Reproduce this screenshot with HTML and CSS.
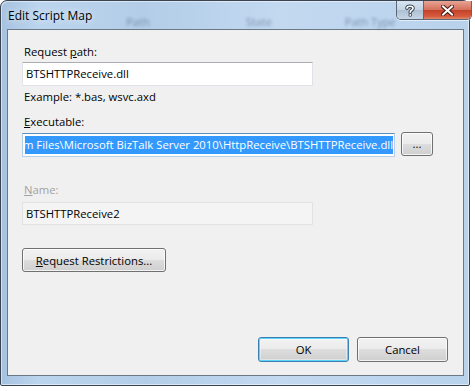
FILE: index.html
```html
<!DOCTYPE html>
<html lang="en">
<head>
    <meta charset="UTF-8">
    <title>Edit Script Map</title>
    <link rel="stylesheet" href="styles.css">
</head>
<body>
    <div class="window">
        <div class="titlebar">
            <span class="title">Edit Script Map</span>
            <span class="ghost ghost-path">Path</span>
            <span class="ghost ghost-state">State</span>
            <span class="ghost ghost-type">Path Type</span>
            <div class="caption-btns">
                <div class="cbtn help">
                    <svg width="12" height="13" viewBox="0 0 12 13">
                        <path d="M3 4.2 C3 1.5 9 1.5 9 4.2 C9 6.2 6.2 6.2 6.2 8.3" fill="none" stroke="#3a4656" stroke-width="3.6" stroke-linecap="round"/>
                        <path d="M3 4.2 C3 1.5 9 1.5 9 4.2 C9 6.2 6.2 6.2 6.2 8.3" fill="none" stroke="#fff" stroke-width="1.6" stroke-linecap="round"/>
                        <circle cx="6.2" cy="11" r="1.8" fill="#3a4656"/>
                        <circle cx="6.2" cy="11" r="0.9" fill="#fff"/>
                    </svg>
                </div>
                <div class="cbtn close">
                    <svg width="13" height="11" viewBox="0 0 13 11">
                        <path d="M2 1.5 L11 9.5 M11 1.5 L2 9.5" stroke="#4a1a12" stroke-width="4" stroke-linecap="square"/>
                        <path d="M2 1.5 L11 9.5 M11 1.5 L2 9.5" stroke="#fff" stroke-width="2" stroke-linecap="square"/>
                    </svg>
                </div>
            </div>
        </div>

        <div class="client">
            <label class="lbl">Request <u>p</u>ath:</label>
            <div class="field field-short">BTSHTTPReceive.dll</div>
            <div class="hint">Example: *.bas, wsvc.axd</div>

            <label class="lbl lbl-exec"><u>E</u>xecutable:</label>
            <div class="exec-row">
                <div class="field field-long focused">
                    <div class="clip"><span class="sel">C:\Program Files\Microsoft BizTalk Server 2010\HttpReceive\BTSHTTPReceive.dll</span></div>
                </div>
                <button class="btn browse">...</button>
            </div>

            <label class="lbl lbl-name disabled"><u>N</u>ame:</label>
            <div class="field field-short readonly">BTSHTTPReceive2</div>

            <button class="btn restrictions"><u>R</u>equest Restrictions...</button>

            <div class="actions">
                <button class="btn btn-default">OK</button>
                <button class="btn">Cancel</button>
            </div>
        </div>
    </div>
</body>
</html>
```

FILE: styles.css
```css
html, body {
    margin: 0;
    background: #fff;
    font-family: "Open Sans", "Noto Sans", sans-serif;
    font-size: 11.3px;
    color: #000;
}
.window {
    width: 470px;
    height: 386px;
    box-sizing: border-box;
    border: 1px solid #3a4350;
    border-radius: 7px 7px 2px 2px;
    padding: 0 5px 9px 6px;
    display: flex;
    flex-direction: column;
    background: linear-gradient(90deg, #a6c2e0 0%, #bcd5ee 8%, #b3cde8 30%, #c2d9f0 60%, #b9d2ec 100%);
    box-shadow: inset 1px 1px 0 rgba(255,255,255,0.5), inset -1px -1px 0 rgba(255,255,255,0.5);
}
.titlebar {
    height: 28px;
    display: flex;
    align-items: flex-start;
    white-space: nowrap;
}
.title {
    flex-shrink: 0;
    margin: 7px 0 0 1px;
    font-size: 12px;
    line-height: 15px;
    text-shadow: 0 0 6px rgba(255,255,255,0.9);
}
.ghost {
    flex-shrink: 0;
    margin-top: 13px;
    font-size: 11px;
    color: rgba(40,60,90,0.45);
    filter: blur(1.4px);
}
.ghost-path { margin-left: 34px; }
.ghost-state { margin-left: 96px; }
.ghost-type { margin-left: 73px; }
.caption-btns {
    margin-left: auto;
    flex-shrink: 0;
    display: flex;
    border: 1px solid #5a6878;
    border-top: none;
    border-radius: 0 0 5px 5px;
    overflow: hidden;
    box-shadow: 0 1px 0 rgba(255,255,255,0.6);
}
.cbtn {
    height: 18px;
    display: flex;
    align-items: center;
    justify-content: center;
}
.help {
    width: 26px;
    border-right: 1px solid #5a6878;
    background: linear-gradient(180deg, #d7e3ef 0%, #c3d3e4 50%, #aebfd2 51%, #c6d6e6 100%);
}
.close {
    width: 47px;
    background: linear-gradient(180deg, #e7a495 0%, #d5705c 48%, #c3432a 52%, #d65a3e 85%, #e08a6c 100%);
}
.client {
    flex: 1;
    border: 1px solid #6b7886;
    background: #f0f0f0;
    padding: 14px 15px 13px 14px;
    display: flex;
    flex-direction: column;
    align-items: flex-start;
}
.lbl {
    display: block;
    margin-left: 2px;
    line-height: 15px;
}
.lbl-exec { margin-top: 10px; }
.lbl-name { margin-top: 25px; }
.disabled { color: #a2a2a2; }
.field {
    box-sizing: border-box;
    height: 24px;
    margin-top: 3px;
    padding: 0 3px;
    background: #fff;
    border: 1px solid #dfe2e8;
    border-top-color: #abadb3;
    line-height: 22px;
    white-space: nowrap;
}
.field-short { width: 291px; }
.field-long {
    width: 373px;
    margin-top: 0;
    padding: 2px 1px 2px 2px;
}
.focused {
    border-color: #b5cfe7;
    border-top-color: #5b8fc0;
}
.readonly {
    height: 23px;
    margin-top: 5px;
    background: #f4f4f4;
    border-color: #e2e2e2;
    line-height: 21px;
}
.clip {
    height: 18px;
    overflow: hidden;
    display: flex;
    justify-content: flex-end;
}
.sel {
    background: #3399ff;
    color: #fff;
    line-height: 18px;
    flex-shrink: 0;
}
.hint {
    margin: 3px 0 0 2px;
    line-height: 15px;
}
.exec-row {
    display: flex;
    align-items: center;
    margin-top: 4px;
}
.btn {
    box-sizing: border-box;
    height: 24px;
    padding: 0;
    font: inherit;
    color: #000;
    border: 1px solid #707070;
    border-radius: 3px;
    background: linear-gradient(180deg, #f2f2f2 0%, #ebebeb 49%, #dddddd 50%, #cfcfcf 100%);
    box-shadow: inset 0 0 0 1px rgba(255,255,255,0.75);
}
.browse {
    width: 32px;
    margin-left: 6px;
    margin-top: -2px;
    line-height: 14px;
}
.restrictions {
    width: 144px;
    margin-top: 23px;
}
.actions {
    margin-top: auto;
    align-self: flex-end;
    display: flex;
    gap: 8px;
}
.actions .btn {
    width: 91px;
    height: 25px;
}
.btn-default {
    border-color: #3c7fb1;
    box-shadow: inset 0 0 0 1px #5fd4fb, inset 0 0 0 2px rgba(255,255,255,0.4);
}
```
